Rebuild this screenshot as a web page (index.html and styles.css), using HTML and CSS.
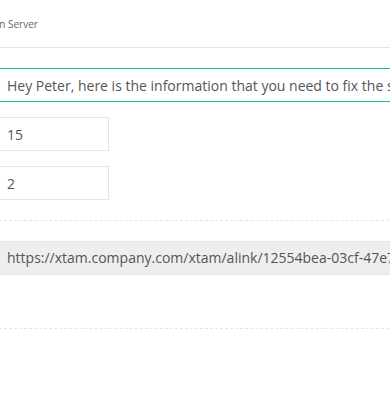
FILE: index.html
```html
<!DOCTYPE html>
<html lang="en">
<head>
    <meta charset="UTF-8">
    <meta name="viewport" content="width=device-width, initial-scale=1.0">
    <title>Share Access Link</title>
    <link rel="stylesheet" href="styles.css">
</head>
<body>
    <div class="page">
        <div class="header">
            <span class="title">Production Server</span>
        </div>
        <form class="share-form">
            <input type="text" class="field message" value="Hey Peter, here is the information that you need to fix the server issue">
            <input type="text" class="field short" value="15">
            <input type="text" class="field short" value="2">
            <hr class="divider">
            <div class="link-box">https://xtam.company.com/xtam/alink/12554bea-03cf-47e7-9a1b-5c2d8f3e61a0</div>
            <hr class="divider bottom">
        </form>
    </div>
</body>
</html>
```

FILE: styles.css
```css
body {
    margin: 0;
    font-family: "Open Sans", sans-serif;
    background: #fff;
    overflow: hidden;
}
.page {
    margin-left: -6px;
    width: 440px;
}
.header {
    height: 47px;
    border-bottom: 1px solid #e5e5e5;
    box-sizing: content-box;
    overflow: hidden;
}
.title {
    display: block;
    margin-left: -40px;
    padding-top: 16px;
    font-size: 10px;
    line-height: 16px;
    color: #666;
}
.share-form {
    padding-top: 20px;
}
.field {
    display: block;
    box-sizing: border-box;
    height: 34px;
    padding: 0 12px;
    margin: 0 0 15px 0;
    border: 1px solid #e5e5e5;
    font-family: "Open Sans", sans-serif;
    font-size: 14px;
    color: #555;
    background: #fff;
    outline: none;
}
.message {
    width: 100%;
    border-color: #1abb9c;
}
.short {
    width: 115px;
}
.divider {
    margin: 20px 0;
    border: none;
    border-top: 1px dashed #e5e5e5;
}
.divider.bottom {
    margin-top: 53px;
}
.link-box {
    box-sizing: border-box;
    height: 34px;
    padding: 0 12px;
    line-height: 32px;
    border: 1px solid #e5e5e5;
    background: #eee;
    font-size: 14px;
    color: #555;
    white-space: nowrap;
    overflow: hidden;
}
```
